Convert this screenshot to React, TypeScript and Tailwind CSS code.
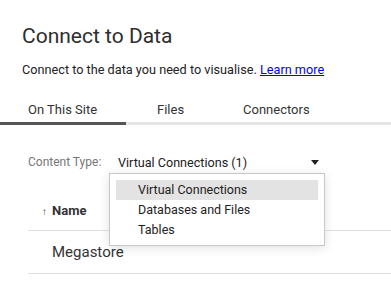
import React from "react";

export default function App() {
  const font = { fontFamily: "Roboto, 'Noto Sans', sans-serif" };
  return (
    <div className="relative w-[391px] h-[290px] overflow-hidden bg-white text-[#333]" style={font}>
      <div className="pl-[22px] pt-[24px]">
        <h1 className="text-[21px] leading-[24px] text-[#2e2e2e]">Connect to Data</h1>
        <p className="mt-[14px] text-[12.7px] leading-[16px] text-[#222]">
          Connect to the data you need to visualise.{" "}
          <a className="text-[#0000ee] underline" href="#">Learn more</a>
        </p>
      </div>
      <div className="mt-[24px] flex text-[13px] leading-[16px] text-[#333]">
        <div className="w-[126px] pl-[28px]">On This Site</div>
        <div className="w-[86px] pl-[31px]">Files</div>
        <div className="pl-[31px]">Connectors</div>
      </div>
      <div className="mt-[4px] flex h-[3px]">
        <div className="w-[126px] bg-[#555]" />
        <div className="flex-1 bg-[#e6e6e6]" />
      </div>
      <div className="pl-[28px] pt-[28px]">
        <div className="flex items-center h-[18px] w-[292px]">
          <span className="w-[90px] text-[12px] text-[#777]">Content Type:</span>
          <span className="flex-1 text-[12.6px] text-[#222] mt-[3px]">Virtual Connections (1)</span>
          <svg width="8" height="5" viewBox="0 0 8 5" className="mt-[1px] mr-[1px]">
            <path d="M0 0 H8 L4 5 Z" fill="#222" />
          </svg>
        </div>
        <div className="mt-[26px] flex items-center h-[28px] border-b border-[#e0e0e0] pb-[5px] box-content">
          <span className="w-[24px] pl-[14px] text-[10px] text-[#333]">↑</span>
          <span className="text-[13px] font-bold text-[#333]">Name</span>
        </div>
        <div className="flex items-center h-[43px] border-b border-[#e0e0e0]">
          <span className="pl-[24px] text-[15px] text-[#333]">Megastore</span>
        </div>
      </div>
      <div className="absolute left-[109px] top-[173px] w-[216px] h-[73px] bg-white border border-[#c8c8c8] shadow-[0_2px_10px_rgba(0,0,0,0.12)] pt-[6px] px-[6px]">
        <div className="h-[20px] flex items-center bg-[#e3e3e3] pl-[22px] text-[12.5px] text-[#222]">Virtual Connections</div>
        <div className="h-[20px] flex items-center pl-[22px] text-[12.5px] text-[#222]">Databases and Files</div>
        <div className="h-[20px] flex items-center pl-[22px] text-[12.5px] text-[#222]">Tables</div>
      </div>
    </div>
  );
}
